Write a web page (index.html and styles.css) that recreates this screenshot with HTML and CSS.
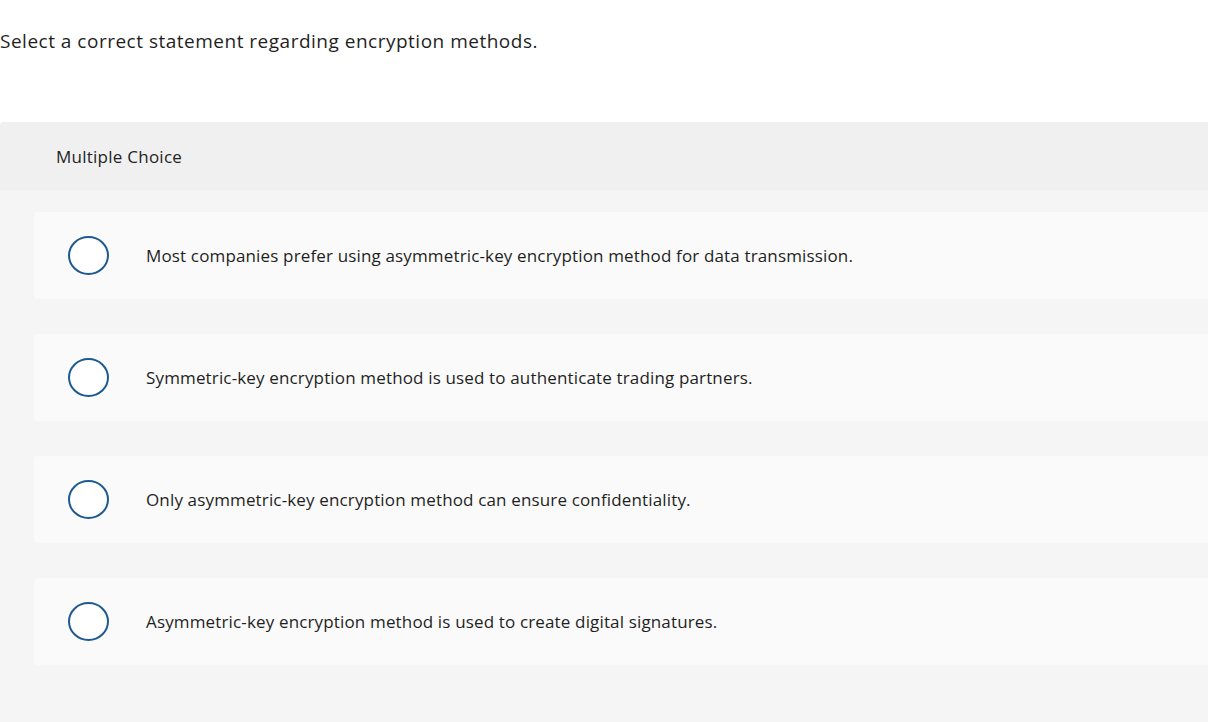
FILE: index.html
```html
<!DOCTYPE html>
<html>
<head>
<meta charset="utf-8">
<link rel="stylesheet" href="styles.css">
</head>
<body>
<div class="prompt">Select a correct statement regarding encryption methods.</div>
<div class="panel">
  <div class="panel-head">Multiple Choice</div>
  <div class="panel-body">
    <div class="option"><span class="radio"></span><span class="label">Most companies prefer using asymmetric-key encryption method for data transmission.</span></div>
    <div class="option"><span class="radio"></span><span class="label">Symmetric-key encryption method is used to authenticate trading partners.</span></div>
    <div class="option"><span class="radio"></span><span class="label">Only asymmetric-key encryption method can ensure confidentiality.</span></div>
    <div class="option"><span class="radio"></span><span class="label">Asymmetric-key encryption method is used to create digital signatures.</span></div>
  </div>
</div>
</body>
</html>
```

FILE: styles.css
```css
html, body {
  margin: 0;
  padding: 0;
  background: #ffffff;
}
body {
  font-family: "Open Sans", "Liberation Sans", sans-serif;
  color: #1f1f1f;
  overflow: hidden;
}
.prompt {
  font-size: 19px;
  letter-spacing: 0.5px;
  line-height: 24px;
  padding-top: 29px;
  height: 122px;
  box-sizing: border-box;
}
.panel {
  border-top-left-radius: 4px;
  overflow: hidden;
  background: #f5f5f5;
}
.panel-head {
  background: #f0f0f0;
  height: 68px;
  display: flex;
  align-items: center;
  padding-left: 56px;
  font-size: 17px;
  letter-spacing: 0.25px;
}
.panel-body {
  padding: 22px 0 60px 34px;
  display: flex;
  flex-direction: column;
  gap: 35px;
}
.option {
  background: #fafafa;
  height: 87px;
  border-radius: 4px 0 0 4px;
  display: flex;
  align-items: center;
}
.radio {
  width: 37px;
  height: 35px;
  border: 2px solid #1d5a92;
  border-radius: 50%;
  background: #ffffff;
  margin-left: 34px;
  flex: none;
}
.label {
  margin-left: 37px;
  font-size: 17px;
  letter-spacing: 0.15px;
}
```
